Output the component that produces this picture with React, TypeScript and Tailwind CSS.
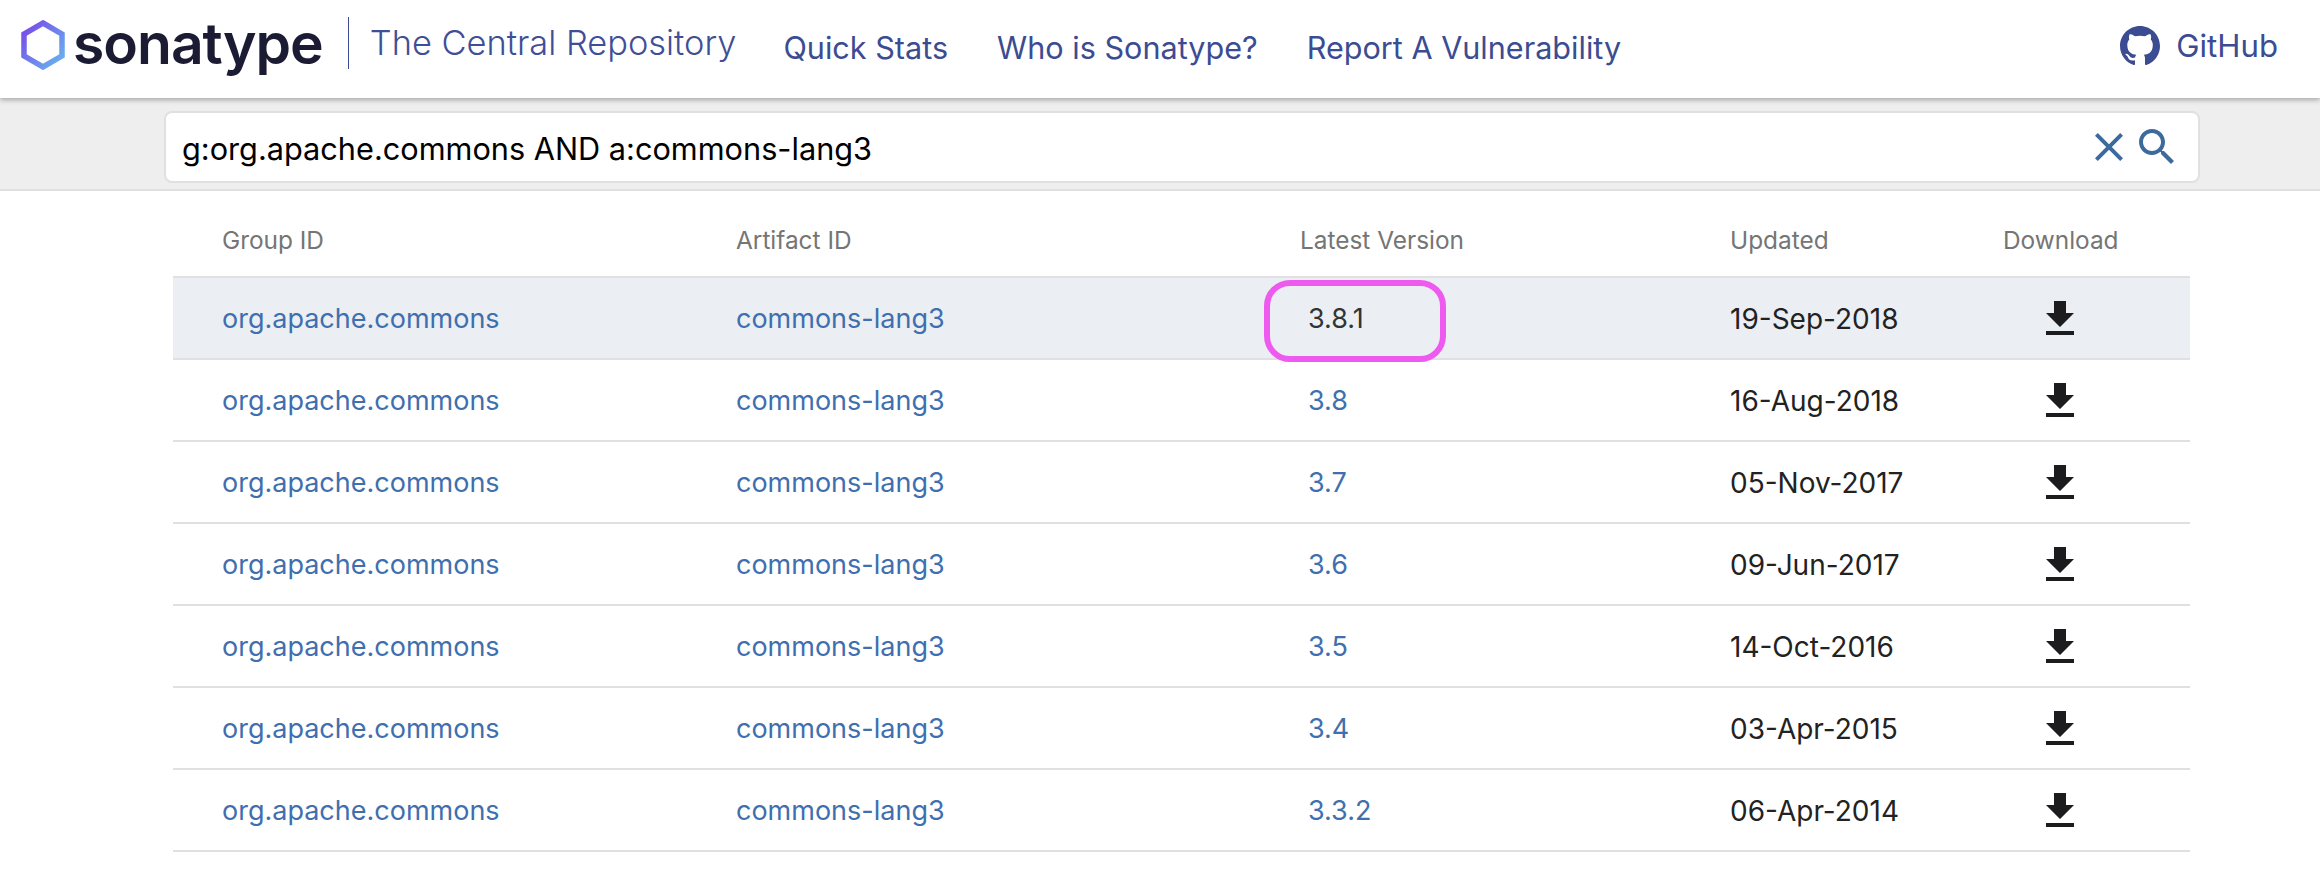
import React from 'react';

const rows = [
  { version: '3.8.1', updated: '19-Sep-2018' },
  { version: '3.8', updated: '16-Aug-2018' },
  { version: '3.7', updated: '05-Nov-2017' },
  { version: '3.6', updated: '09-Jun-2017' },
  { version: '3.5', updated: '14-Oct-2016' },
  { version: '3.4', updated: '03-Apr-2015' },
  { version: '3.3.2', updated: '06-Apr-2014' },
];

const gridCols = 'grid grid-cols-[514px_564px_430px_273px_114px] pl-[49px] items-center';

const Logo = () => (
  <svg width="44" height="50" viewBox="0 0 44 50" className="mb-[8px] shrink-0">
    <defs>
      <linearGradient id="hex" x1="0" y1="0" x2="1" y2="1">
        <stop offset="0" stopColor="#7a45ea" />
        <stop offset="1" stopColor="#66b8ee" />
      </linearGradient>
    </defs>
    <path d="M22 3 L41 14 V36 L22 47 L3 36 V14 Z" fill="none" stroke="url(#hex)" strokeWidth="5.5" />
  </svg>
);

const GithubMark = () => (
  <svg width="40" height="40" viewBox="0 0 16 16" fill="#3b4c92">
    <path
      fillRule="evenodd"
      d="M8 0C3.58 0 0 3.58 0 8c0 3.54 2.29 6.53 5.47 7.59.4.07.55-.17.55-.38 0-.19-.01-.82-.01-1.49-2.01.37-2.53-.49-2.69-.94-.09-.23-.48-.94-.82-1.13-.28-.15-.68-.52-.01-.53.63-.01 1.08.58 1.23.82.72 1.21 1.87.87 2.33.66.07-.52.28-.87.51-1.07-1.78-.2-3.64-.89-3.64-3.95 0-.87.31-1.59.82-2.15-.08-.2-.36-1.02.08-2.12 0 0 .67-.21 2.2.82.64-.18 1.32-.27 2-.27.68 0 1.36.09 2 .27 1.53-1.04 2.2-.82 2.2-.82.44 1.1.16 1.92.08 2.12.51.56.82 1.27.82 2.15 0 3.07-1.87 3.75-3.65 3.95.29.25.54.73.54 1.48 0 1.07-.01 1.93-.01 2.2 0 .21.15.46.55.38A8.013 8.013 0 0016 8c0-4.42-3.58-8-8-8z"
    />
  </svg>
);

const DownloadIcon = () => (
  <svg width="48" height="48" viewBox="0 0 24 24" fill="#1c1c1e">
    <path d="M19 9h-4V3H9v6H5l7 7 7-7zM5 18v2h14v-2H5z" />
  </svg>
);

export default function App() {
  return (
    <div className="min-h-[876px] bg-white font-['Inter',sans-serif]">
      <header className="relative z-10 flex h-[98px] items-center bg-white pl-[21px] pr-[42px] shadow-[0_2px_5px_rgba(0,0,0,0.3)]">
        <Logo />
        <span className="mb-[12px] ml-[8px] text-[57px] font-semibold leading-none tracking-[-1px] text-[#1b1c33]">
          sonatype
        </span>
        <div className="mb-[12px] ml-[25px] h-[52px] w-px bg-[#3b4c92]" />
        <span className="mb-[12px] ml-[21px] text-[34.4px] font-light text-[#3f4f97]">The Central Repository</span>
        <nav className="mb-[2px] ml-[47px] flex gap-[49px] text-[30.6px] text-[#3b4c92]">
          <a>Quick Stats</a>
          <a>Who is Sonatype?</a>
          <a>Report A Vulnerability</a>
        </nav>
        <div className="mb-[6px] ml-auto flex items-center gap-[16px] text-[31.2px] text-[#3b4c92]">
          <GithubMark />
          <span>GitHub</span>
        </div>
      </header>

      <div className="h-[93px] border-b-2 border-[#e0e0e0] bg-[#eeeeee] pl-[164px] pt-[13px]">
        <div className="flex h-[72px] w-[2036px] items-center rounded-[8px] border-2 border-[#e0e0e0] bg-white pl-[16px] pr-[17px]">
          <span className="flex-1 pt-[5px] text-[30.7px] text-black">g:org.apache.commons AND a:commons-lang3</span>
          <svg width="48" height="48" viewBox="0 0 24 24" fill="#3d6a9c">
            <path d="M19 6.41L17.59 5 12 10.59 6.41 5 5 6.41 10.59 12 5 17.59 6.41 19 12 13.41 17.59 19 19 17.59 13.41 12 19 6.41z" />
          </svg>
          <svg width="48" height="48" viewBox="0 0 24 24" fill="#3d6a9c">
            <path d="M15.5 14h-.79l-.28-.27C15.41 12.59 16 11.11 16 9.5 16 5.91 13.09 3 9.5 3S3 5.91 3 9.5 5.91 16 9.5 16c1.61 0 3.09-.59 4.23-1.57l.27.28v.79l5 4.99L20.49 19l-4.99-5zm-6 0C7.01 14 5 11.99 5 9.5S7.01 5 9.5 5 14 7.01 14 9.5 11.99 14 9.5 14z" />
          </svg>
        </div>
      </div>

      <div className="relative ml-[173px] w-[2017px]">
        <div className={`${gridCols} h-[87px] border-b-2 border-[#e0e0e2] pt-[13px] text-[24.4px] text-[#757575]`}>
          <div>Group ID</div>
          <div>Artifact ID</div>
          <div>Latest Version</div>
          <div>Updated</div>
          <div>Download</div>
        </div>
        {rows.map((row, i) => (
          <div
            key={row.version}
            className={`${gridCols} h-[82px] border-b-2 border-[#e0e0e2] pt-[2px] ${i === 0 ? 'bg-[#ebeef3]' : ''}`}
          >
            <a className="text-[27px] text-[#3f6fae]">org.apache.commons</a>
            <a className="text-[27px] text-[#3f6fae]">commons-lang3</a>
            <a className={`pl-[8px] text-[27px] ${i === 0 ? 'text-[#333333]' : 'text-[#3f6fae]'}`}>{row.version}</a>
            <div className="text-[28px] text-[#222222]">{row.updated}</div>
            <div className="flex justify-center">
              <DownloadIcon />
            </div>
          </div>
        ))}
        {/* highlight drawn over the latest version */}
        <div className="absolute left-[1091px] top-[89px] h-[82px] w-[182px] rounded-[26px] border-[6px] border-[#ee5af0]" />
      </div>
    </div>
  );
}
